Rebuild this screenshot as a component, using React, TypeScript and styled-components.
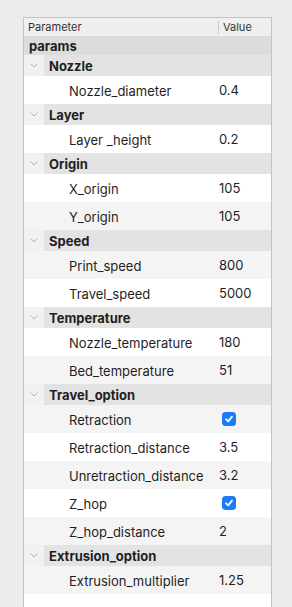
import styled, { createGlobalStyle } from 'styled-components';

const GlobalStyle = createGlobalStyle`
  html, body {
    margin: 0;
    padding: 0;
    background: #ececec;
  }
`;

const Page = styled.div`
  box-sizing: border-box;
  width: 292px;
  height: 607px;
  padding: 17px 20px 0 23px;
  background: #ececec;
  font-family: Inter, 'Liberation Sans', sans-serif;
  color: #1f1f1f;
  overflow: hidden;
`;

const Panel = styled.div`
  height: 100%;
  background: #fff;
  border: 1px solid #c4c4c4;
  border-bottom: 0;
`;

const Grid = styled.div`
  display: grid;
  grid-template-columns: 194px 1fr;
  align-items: center;
`;

const Header = styled(Grid)`
  height: 18px;
  background: #efefef;
  font-size: 11px;
  color: #333;
`;

const HeaderCell = styled.div<{ $divider?: boolean }>`
  display: flex;
  align-items: center;
  padding-left: 4px;
  border-left: ${({ $divider }) => ($divider ? '1px solid #c8c8c8' : '0')};
  height: ${({ $divider }) => ($divider ? '13px' : '100%')};
  box-sizing: border-box;
`;

const RootRow = styled.div`
  height: 19px;
  display: flex;
  align-items: center;
  padding-left: 5px;
  background: #dcdcdc;
  font-size: 13px;
  font-weight: 700;
`;

const GroupRow = styled.div`
  height: 21px;
  display: grid;
  grid-template-columns: 20px 1fr;
  font-size: 13px;
  font-weight: 700;
`;

const Toggle = styled.div`
  display: flex;
  align-items: center;
  justify-content: center;
  background: #f1f1f1;
`;

const GroupLabel = styled.div`
  display: flex;
  align-items: center;
  padding-left: 5px;
  background: #e3e3e3;
`;

const ItemRow = styled(Grid)<{ $odd: boolean }>`
  height: 28px;
  background: ${({ $odd }) => ($odd ? '#f4f4f4' : '#ffffff')};
  font-size: 13px;
`;

const ItemLabel = styled.div`
  padding: 2px 0 0 45px;
  white-space: nowrap;
`;

const ItemValue = styled.div`
  padding: 0 0 1px 1px;
  display: flex;
  align-items: center;
`;

const Check = styled.span`
  width: 14px;
  height: 14px;
  margin: 1px 0 0 3px;
  border-radius: 3.5px;
  background: #1b7cf6;
  display: inline-flex;
  align-items: center;
  justify-content: center;
`;

const Chevron = () => (
  <svg width="8" height="5" viewBox="0 0 8 5">
    <polyline points="0.5,0.5 4,4 7.5,0.5" fill="none" stroke="#b2b2b2" strokeWidth="1" />
  </svg>
);

const CheckMark = () => (
  <Check>
    <svg width="10" height="10" viewBox="0 0 10 10">
      <polyline points="2,5.3 4.2,7.4 8,2.6" fill="none" stroke="#fff" strokeWidth="1.8" strokeLinecap="round" strokeLinejoin="round" />
    </svg>
  </Check>
);

type Item = { name: string; value: string | boolean };
type Group = { name: string; items: Item[] };

const groups: Group[] = [
  { name: 'Nozzle', items: [{ name: 'Nozzle_diameter', value: '0.4' }] },
  { name: 'Layer', items: [{ name: 'Layer _height', value: '0.2' }] },
  {
    name: 'Origin',
    items: [
      { name: 'X_origin', value: '105' },
      { name: 'Y_origin', value: '105' },
    ],
  },
  {
    name: 'Speed',
    items: [
      { name: 'Print_speed', value: '800' },
      { name: 'Travel_speed', value: '5000' },
    ],
  },
  {
    name: 'Temperature',
    items: [
      { name: 'Nozzle_temperature', value: '180' },
      { name: 'Bed_temperature', value: '51' },
    ],
  },
  {
    name: 'Travel_option',
    items: [
      { name: 'Retraction', value: true },
      { name: 'Retraction_distance', value: '3.5' },
      { name: 'Unretraction_distance', value: '3.2' },
      { name: 'Z_hop', value: true },
      { name: 'Z_hop_distance', value: '2' },
    ],
  },
  { name: 'Extrusion_option', items: [{ name: 'Extrusion_multiplier', value: '1.25' }] },
];

export default function App() {
  // row index counts every visible row, params = 0, for the alternating colours
  let row = 0;

  return (
    <Page>
      <GlobalStyle />
      <Panel>
        <Header>
          <HeaderCell>Parameter</HeaderCell>
          <HeaderCell $divider>Value</HeaderCell>
        </Header>
        <RootRow>params</RootRow>
        {groups.map((g) => {
          row += 1;
          return (
            <div key={g.name}>
              <GroupRow>
                <Toggle>
                  <Chevron />
                </Toggle>
                <GroupLabel>{g.name}</GroupLabel>
              </GroupRow>
              {g.items.map((it) => {
                row += 1;
                return (
                  <ItemRow key={it.name} $odd={row % 2 === 1}>
                    <ItemLabel>{it.name}</ItemLabel>
                    <ItemValue>{typeof it.value === 'boolean' ? <CheckMark /> : it.value}</ItemValue>
                  </ItemRow>
                );
              })}
            </div>
          );
        })}
      </Panel>
    </Page>
  );
}
